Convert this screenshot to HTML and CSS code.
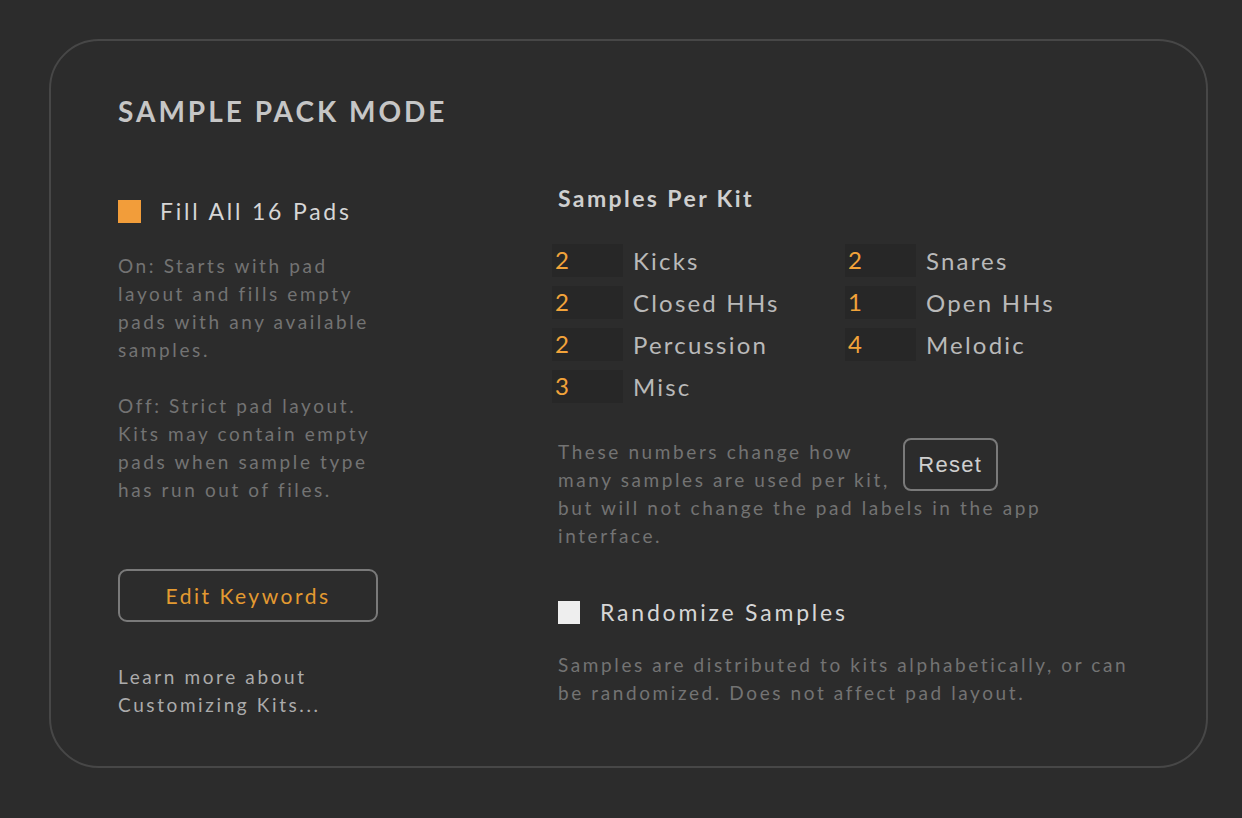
FILE: index.html
```html
<!DOCTYPE html>
<html>
<head>
<meta charset="utf-8">
<link rel="stylesheet" href="styles.css">
</head>
<body>
<div class="panel">
  <h1 class="title">SAMPLE PACK MODE</h1>
  <div class="cols">
    <div class="left">
      <div class="check-row">
        <span class="box box-on"></span>
        <span class="check-label">Fill All 16 Pads</span>
      </div>
      <p class="desc first">On: Starts with pad<br>layout and fills empty<br>pads with any available<br>samples.</p>
      <p class="desc second">Off: Strict pad layout.<br>Kits may contain empty<br>pads when sample type<br>has run out of files.</p>
      <button class="btn-edit">Edit Keywords</button>
      <p class="learn">Learn more about<br>Customizing Kits...</p>
    </div>
    <div class="right">
      <h2 class="sub">Samples Per Kit</h2>
      <div class="grid">
        <div class="item"><span class="num">2</span><span class="lbl">Kicks</span></div>
        <div class="item"><span class="num">2</span><span class="lbl">Snares</span></div>
        <div class="item"><span class="num">2</span><span class="lbl">Closed HHs</span></div>
        <div class="item"><span class="num">1</span><span class="lbl">Open HHs</span></div>
        <div class="item"><span class="num">2</span><span class="lbl">Percussion</span></div>
        <div class="item"><span class="num">4</span><span class="lbl">Melodic</span></div>
        <div class="item"><span class="num">3</span><span class="lbl">Misc</span></div>
      </div>
      <div class="note">
        <div class="note-top">
          <p class="desc tight">These numbers change how<br>many samples are used per kit,</p>
          <button class="btn-reset">Reset</button>
        </div>
        <p class="desc tight">but will not change the pad labels in the app<br>interface.</p>
      </div>
      <div class="check-row rand">
        <span class="box box-off"></span>
        <span class="check-label">Randomize Samples</span>
      </div>
      <p class="desc rand-desc">Samples are distributed to kits alphabetically, or can<br>be randomized. Does not affect pad layout.</p>
    </div>
  </div>
</div>
</body>
</html>
```

FILE: styles.css
```css
html, body {
  margin: 0;
  padding: 0;
  background: #2c2c2c;
}
body {
  width: 1242px;
  height: 818px;
  font-family: Lato, "Open Sans", sans-serif;
  overflow: hidden;
}
.panel {
  box-sizing: border-box;
  margin: 39px 0 0 49px;
  width: 1159px;
  height: 729px;
  border: 2px solid #474747;
  border-radius: 50px;
  padding: 52px 0 0 67px;
}
.title {
  margin: 0;
  font-size: 28px;
  font-weight: 700;
  letter-spacing: 3px;
  color: #c6c6c6;
  line-height: 36px;
}
.cols {
  display: flex;
  margin-top: 67px;
}
.left {
  width: 440px;
  flex: none;
}
.check-row {
  display: flex;
  align-items: center;
  height: 30px;
}
.box {
  width: 23px;
  height: 23px;
  flex: none;
}
.box-on { background: #f29d3a; }
.box-off { background: #eeeeee; }
.check-label {
  margin-left: 19px;
  font-size: 23px;
  letter-spacing: 2.8px;
  color: #d6d6d6;
}
.desc {
  margin: 0;
  font-size: 19px;
  line-height: 28px;
  letter-spacing: 2.6px;
  color: #737373;
}
.desc.first { margin-top: 26px; }
.desc.second { margin-top: 28px; }
.btn-edit {
  display: block;
  margin-top: 65px;
  width: 260px;
  height: 53px;
  padding: 0;
  background: transparent;
  border: 2px solid #7a7a7a;
  border-radius: 9px;
  color: #e39a31;
  font-family: Lato, sans-serif;
  font-size: 21px;
  letter-spacing: 2.5px;
}
.learn {
  margin: 41px 0 0;
  font-size: 19px;
  line-height: 28px;
  letter-spacing: 2.6px;
  color: #ababab;
}
.right {
  flex: 1;
  margin-top: -13px;
}
.sub {
  margin: 0;
  font-size: 23px;
  font-weight: 700;
  letter-spacing: 2.4px;
  color: #cfcfcf;
  line-height: 30px;
}
.grid {
  display: grid;
  grid-template-columns: 293px 250px;
  row-gap: 9px;
  margin-top: 31px;
  margin-left: -6px;
}
.item {
  display: flex;
  align-items: center;
  height: 33px;
}
.num {
  box-sizing: border-box;
  width: 71px;
  height: 33px;
  background: #272727;
  color: #f2a33a;
  font-size: 24px;
  line-height: 31px;
  padding-left: 3px;
  flex: none;
}
.lbl {
  margin-left: 10px;
  font-size: 24px;
  letter-spacing: 2.2px;
  color: #b9b9b9;
  line-height: 30px;
}
.note {
  margin-top: 35px;
}
.note-top {
  display: flex;
  align-items: flex-start;
}
.btn-reset {
  margin: 0 0 0 13px;
  width: 95px;
  height: 53px;
  padding: 0;
  background: transparent;
  border: 2px solid #7a7a7a;
  border-radius: 8px;
  color: #cfcfcf;
  font-family: "Liberation Sans", Arial, sans-serif;
  font-size: 22px;
  letter-spacing: 1.3px;
}
.tight { white-space: nowrap; }
.rand {
  margin-top: 47px;
}
.rand .box { width: 22px; }
.rand .check-label { margin-left: 20px; }
.rand-desc {
  margin-top: 24px;
}
```
